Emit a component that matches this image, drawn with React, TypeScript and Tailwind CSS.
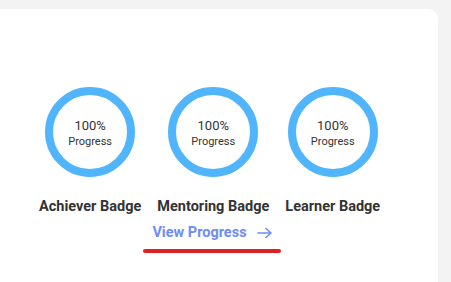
import React from "react";

const badges = ["Achiever Badge", "Mentoring Badge", "Learner Badge"];

export default function App() {
  return (
    <div
      className="w-[451px] h-[282px] bg-[#f3f3f3] pt-[9px] overflow-hidden"
      style={{ fontFamily: "Roboto, 'Noto Sans', sans-serif" }}
    >
      <div className="w-[438px] h-[273px] bg-white rounded-tr-[10px] pt-[78px] pl-[39px]">
        <div className="flex gap-4">
          {badges.map((b) => (
            <div key={b} className="flex flex-col items-center">
              <div className="w-[90px] h-[90px] rounded-full border-[8px] border-[#50b5fd] flex flex-col items-center justify-center">
                <span className="mt-[3px] text-[13px] leading-[16px] text-[#333]">100%</span>
                <span className="mt-[1px] text-[11px] leading-[14px] text-[#333]">Progress</span>
              </div>
              <div className="mt-5 text-[14.5px] leading-5 font-bold text-[#333] whitespace-nowrap">{b}</div>
            </div>
          ))}
        </div>
        <div className="w-[346px] flex flex-col items-center mt-[6px]">
          <div className="flex items-center gap-[10px] text-[14.5px] leading-5 font-bold text-[#6e8cf8]">
            <span>View Progress</span>
            <svg width="15" height="12" viewBox="0 0 15 12" fill="none" stroke="#6e8cf8" strokeWidth="1.6" strokeLinecap="round" strokeLinejoin="round">
              <path d="M1 6h13M9 1.5 14 6l-5 4.5" />
            </svg>
          </div>
          <div className="mt-[6px] w-[138px] h-[4px] rounded-full bg-[#e21f26]" />
        </div>
      </div>
    </div>
  );
}
